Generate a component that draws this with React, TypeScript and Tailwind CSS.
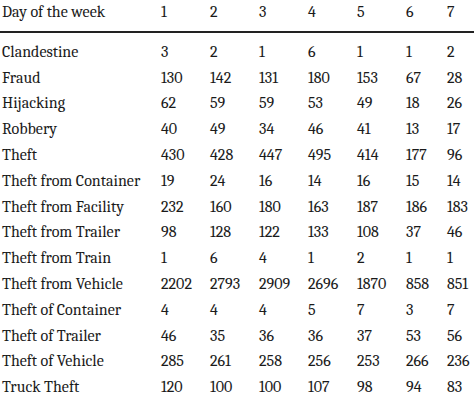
import React from 'react';

const header = ['Day of the week', '1', '2', '3', '4', '5', '6', '7'];

const rows: string[][] = [
  ['Clandestine', '3', '2', '1', '6', '1', '1', '2'],
  ['Fraud', '130', '142', '131', '180', '153', '67', '28'],
  ['Hijacking', '62', '59', '59', '53', '49', '18', '26'],
  ['Robbery', '40', '49', '34', '46', '41', '13', '17'],
  ['Theft', '430', '428', '447', '495', '414', '177', '96'],
  ['Theft from Container', '19', '24', '16', '14', '16', '15', '14'],
  ['Theft from Facility', '232', '160', '180', '163', '187', '186', '183'],
  ['Theft from Trailer', '98', '128', '122', '133', '108', '37', '46'],
  ['Theft from Train', '1', '6', '4', '1', '2', '1', '1'],
  ['Theft from Vehicle', '2202', '2793', '2909', '2696', '1870', '858', '851'],
  ['Theft of Container', '4', '4', '4', '5', '7', '3', '7'],
  ['Theft of Trailer', '46', '35', '36', '36', '37', '53', '56'],
  ['Theft of Vehicle', '285', '261', '258', '256', '253', '266', '236'],
  ['Truck Theft', '120', '100', '100', '107', '98', '94', '83'],
];

const Row: React.FC<{ cells: string[] }> = ({ cells }) => (
  <div className="grid h-[25.8px] grid-cols-[161px_49px_49px_49px_49px_49px_41px_1fr] items-center">
    {cells.map((c, i) => (
      <span key={i} className={i === 0 ? 'whitespace-nowrap pl-[2px]' : 'whitespace-nowrap'}>
        {c}
      </span>
    ))}
  </div>
);

export default function App() {
  return (
    <div className="h-[403px] w-[474px] overflow-hidden bg-white font-serif text-[16px] leading-[25.8px] text-[#1a1a1a]">
      <Row cells={header} />
      <div className="mt-[5px] h-[2px] bg-[#222]" />
      <div className="mt-[7px]">
        {rows.map((r) => (
          <Row key={r[0]} cells={r} />
        ))}
      </div>
    </div>
  );
}
